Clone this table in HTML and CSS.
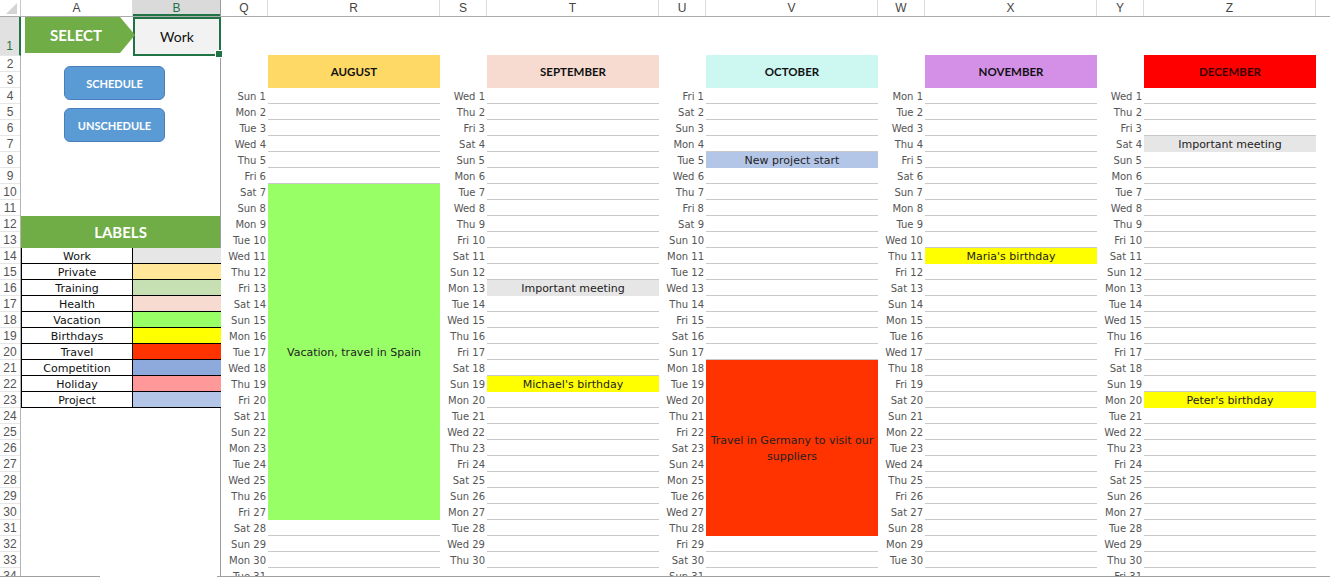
FILE: index.html
```html
<!DOCTYPE html>
<html>
<head>
<meta charset="utf-8">
<title>Calendar</title>
<link rel="stylesheet" href="styles.css">
</head>
<body>
<div class="sheet">
  <div class="colhead">
    <span class="corner"><svg width="20" height="16" viewBox="0 0 20 16"><polygon points="17,3 17,14 6,14" fill="#d4d4d4"/></svg></span>
    <span class="wa">A</span>
    <span class="wb sel">B</span>
    <span class="wq">Q</span><span class="wr">R</span>
    <span class="wq">S</span><span class="wr">T</span>
    <span class="wq">U</span><span class="wr">V</span>
    <span class="wq">W</span><span class="wr">X</span>
    <span class="wq">Y</span><span class="wr">Z</span>
    <span class="rest"></span>
  </div>
  <div class="body">
    <div class="rowhead">
      <span class="r1">1</span><span>2</span><span>3</span><span>4</span><span>5</span><span>6</span><span>7</span><span>8</span><span>9</span><span>10</span><span>11</span><span>12</span><span>13</span><span>14</span><span>15</span><span>16</span><span>17</span><span>18</span><span>19</span><span>20</span><span>21</span><span>22</span><span>23</span><span>24</span><span>25</span><span>26</span><span>27</span><span>28</span><span>29</span><span>30</span><span>31</span><span>32</span><span>33</span><span>34</span>
    </div>
    <div class="left">
      <div class="row1">
        <div class="acell"><div class="arrow">SELECT</div></div>
        <div class="work">Work</div>
      </div>
      <div class="buttons">
        <div class="btn">SCHEDULE</div>
        <div class="btn">UNSCHEDULE</div>
      </div>
      <div class="labels-head">LABELS</div>
      <div class="ltable">
        <span class="n">Work</span><span class="sw c-work"></span>
        <span class="n">Private</span><span class="sw c-private"></span>
        <span class="n">Training</span><span class="sw c-training"></span>
        <span class="n">Health</span><span class="sw c-health"></span>
        <span class="n">Vacation</span><span class="sw c-vacation"></span>
        <span class="n">Birthdays</span><span class="sw c-birthday"></span>
        <span class="n">Travel</span><span class="sw c-travel"></span>
        <span class="n">Competition</span><span class="sw c-competition"></span>
        <span class="n">Holiday</span><span class="sw c-holiday"></span>
        <span class="n">Project</span><span class="sw c-project"></span>
      </div>
    </div>
    <div class="months">
      <div class="month">
        <div class="mhead m-aug">AUGUST</div>
        <div class="days">
          <span class="d">Sun 1</span><span class="c"></span>
          <span class="d">Mon 2</span><span class="c"></span>
          <span class="d">Tue 3</span><span class="c"></span>
          <span class="d">Wed 4</span><span class="c"></span>
          <span class="d">Thu 5</span><span class="c"></span>
          <span class="d">Fri 6</span><span class="c"></span>
          <span class="d">Sat 7</span><span class="ev c-vacation s21">Vacation, travel in Spain</span>
          <span class="d">Sun 8</span>
          <span class="d">Mon 9</span>
          <span class="d">Tue 10</span>
          <span class="d">Wed 11</span>
          <span class="d">Thu 12</span>
          <span class="d">Fri 13</span>
          <span class="d">Sat 14</span>
          <span class="d">Sun 15</span>
          <span class="d">Mon 16</span>
          <span class="d">Tue 17</span>
          <span class="d">Wed 18</span>
          <span class="d">Thu 19</span>
          <span class="d">Fri 20</span>
          <span class="d">Sat 21</span>
          <span class="d">Sun 22</span>
          <span class="d">Mon 23</span>
          <span class="d">Tue 24</span>
          <span class="d">Wed 25</span>
          <span class="d">Thu 26</span>
          <span class="d">Fri 27</span>
          <span class="d">Sat 28</span><span class="c"></span>
          <span class="d">Sun 29</span><span class="c"></span>
          <span class="d">Mon 30</span><span class="c"></span>
          <span class="d">Tue 31</span><span class="c"></span>
        </div>
      </div>
      <div class="month">
        <div class="mhead m-sep">SEPTEMBER</div>
        <div class="days">
          <span class="d">Wed 1</span><span class="c"></span>
          <span class="d">Thu 2</span><span class="c"></span>
          <span class="d">Fri 3</span><span class="c"></span>
          <span class="d">Sat 4</span><span class="c"></span>
          <span class="d">Sun 5</span><span class="c"></span>
          <span class="d">Mon 6</span><span class="c"></span>
          <span class="d">Tue 7</span><span class="c"></span>
          <span class="d">Wed 8</span><span class="c"></span>
          <span class="d">Thu 9</span><span class="c"></span>
          <span class="d">Fri 10</span><span class="c"></span>
          <span class="d">Sat 11</span><span class="c"></span>
          <span class="d">Sun 12</span><span class="c"></span>
          <span class="d">Mon 13</span><span class="ev c-work">Important meeting</span>
          <span class="d">Tue 14</span><span class="c"></span>
          <span class="d">Wed 15</span><span class="c"></span>
          <span class="d">Thu 16</span><span class="c"></span>
          <span class="d">Fri 17</span><span class="c"></span>
          <span class="d">Sat 18</span><span class="c"></span>
          <span class="d">Sun 19</span><span class="ev c-birthday">Michael's birthday</span>
          <span class="d">Mon 20</span><span class="c"></span>
          <span class="d">Tue 21</span><span class="c"></span>
          <span class="d">Wed 22</span><span class="c"></span>
          <span class="d">Thu 23</span><span class="c"></span>
          <span class="d">Fri 24</span><span class="c"></span>
          <span class="d">Sat 25</span><span class="c"></span>
          <span class="d">Sun 26</span><span class="c"></span>
          <span class="d">Mon 27</span><span class="c"></span>
          <span class="d">Tue 28</span><span class="c"></span>
          <span class="d">Wed 29</span><span class="c"></span>
          <span class="d">Thu 30</span><span class="c"></span>
          <span class="d"></span><span class="e"></span>
        </div>
      </div>
      <div class="month">
        <div class="mhead m-oct">OCTOBER</div>
        <div class="days">
          <span class="d">Fri 1</span><span class="c"></span>
          <span class="d">Sat 2</span><span class="c"></span>
          <span class="d">Sun 3</span><span class="c"></span>
          <span class="d">Mon 4</span><span class="c"></span>
          <span class="d">Tue 5</span><span class="ev c-project">New project start</span>
          <span class="d">Wed 6</span><span class="c"></span>
          <span class="d">Thu 7</span><span class="c"></span>
          <span class="d">Fri 8</span><span class="c"></span>
          <span class="d">Sat 9</span><span class="c"></span>
          <span class="d">Sun 10</span><span class="c"></span>
          <span class="d">Mon 11</span><span class="c"></span>
          <span class="d">Tue 12</span><span class="c"></span>
          <span class="d">Wed 13</span><span class="c"></span>
          <span class="d">Thu 14</span><span class="c"></span>
          <span class="d">Fri 15</span><span class="c"></span>
          <span class="d">Sat 16</span><span class="c"></span>
          <span class="d">Sun 17</span><span class="c"></span>
          <span class="d">Mon 18</span><span class="ev c-travel s11">Travel in Germany to visit our suppliers</span>
          <span class="d">Tue 19</span>
          <span class="d">Wed 20</span>
          <span class="d">Thu 21</span>
          <span class="d">Fri 22</span>
          <span class="d">Sat 23</span>
          <span class="d">Sun 24</span>
          <span class="d">Mon 25</span>
          <span class="d">Tue 26</span>
          <span class="d">Wed 27</span>
          <span class="d">Thu 28</span>
          <span class="d">Fri 29</span><span class="c"></span>
          <span class="d">Sat 30</span><span class="c"></span>
          <span class="d">Sun 31</span><span class="c"></span>
        </div>
      </div>
      <div class="month">
        <div class="mhead m-nov">NOVEMBER</div>
        <div class="days">
          <span class="d">Mon 1</span><span class="c"></span>
          <span class="d">Tue 2</span><span class="c"></span>
          <span class="d">Wed 3</span><span class="c"></span>
          <span class="d">Thu 4</span><span class="c"></span>
          <span class="d">Fri 5</span><span class="c"></span>
          <span class="d">Sat 6</span><span class="c"></span>
          <span class="d">Sun 7</span><span class="c"></span>
          <span class="d">Mon 8</span><span class="c"></span>
          <span class="d">Tue 9</span><span class="c"></span>
          <span class="d">Wed 10</span><span class="c"></span>
          <span class="d">Thu 11</span><span class="ev c-birthday">Maria's birthday</span>
          <span class="d">Fri 12</span><span class="c"></span>
          <span class="d">Sat 13</span><span class="c"></span>
          <span class="d">Sun 14</span><span class="c"></span>
          <span class="d">Mon 15</span><span class="c"></span>
          <span class="d">Tue 16</span><span class="c"></span>
          <span class="d">Wed 17</span><span class="c"></span>
          <span class="d">Thu 18</span><span class="c"></span>
          <span class="d">Fri 19</span><span class="c"></span>
          <span class="d">Sat 20</span><span class="c"></span>
          <span class="d">Sun 21</span><span class="c"></span>
          <span class="d">Mon 22</span><span class="c"></span>
          <span class="d">Tue 23</span><span class="c"></span>
          <span class="d">Wed 24</span><span class="c"></span>
          <span class="d">Thu 25</span><span class="c"></span>
          <span class="d">Fri 26</span><span class="c"></span>
          <span class="d">Sat 27</span><span class="c"></span>
          <span class="d">Sun 28</span><span class="c"></span>
          <span class="d">Mon 29</span><span class="c"></span>
          <span class="d">Tue 30</span><span class="c"></span>
          <span class="d"></span><span class="e"></span>
        </div>
      </div>
      <div class="month">
        <div class="mhead m-dec">DECEMBER</div>
        <div class="days">
          <span class="d">Wed 1</span><span class="c"></span>
          <span class="d">Thu 2</span><span class="c"></span>
          <span class="d">Fri 3</span><span class="c"></span>
          <span class="d">Sat 4</span><span class="ev c-work">Important meeting</span>
          <span class="d">Sun 5</span><span class="c"></span>
          <span class="d">Mon 6</span><span class="c"></span>
          <span class="d">Tue 7</span><span class="c"></span>
          <span class="d">Wed 8</span><span class="c"></span>
          <span class="d">Thu 9</span><span class="c"></span>
          <span class="d">Fri 10</span><span class="c"></span>
          <span class="d">Sat 11</span><span class="c"></span>
          <span class="d">Sun 12</span><span class="c"></span>
          <span class="d">Mon 13</span><span class="c"></span>
          <span class="d">Tue 14</span><span class="c"></span>
          <span class="d">Wed 15</span><span class="c"></span>
          <span class="d">Thu 16</span><span class="c"></span>
          <span class="d">Fri 17</span><span class="c"></span>
          <span class="d">Sat 18</span><span class="c"></span>
          <span class="d">Sun 19</span><span class="c"></span>
          <span class="d">Mon 20</span><span class="ev c-birthday">Peter's birthday</span>
          <span class="d">Tue 21</span><span class="c"></span>
          <span class="d">Wed 22</span><span class="c"></span>
          <span class="d">Thu 23</span><span class="c"></span>
          <span class="d">Fri 24</span><span class="c"></span>
          <span class="d">Sat 25</span><span class="c"></span>
          <span class="d">Sun 26</span><span class="c"></span>
          <span class="d">Mon 27</span><span class="c"></span>
          <span class="d">Tue 28</span><span class="c"></span>
          <span class="d">Wed 29</span><span class="c"></span>
          <span class="d">Thu 30</span><span class="c"></span>
          <span class="d">Fri 31</span><span class="c"></span>
        </div>
      </div>
    </div>
  </div>
  <div class="foot"><i class="f1"></i><i class="gap"></i><i class="f2"></i></div>
</div>
</body>
</html>
```
FILE: styles.css
```css
* { box-sizing: border-box; margin: 0; padding: 0; }
html, body { width: 1330px; height: 578px; overflow: hidden; background: #fff; }
body { font-family: "DejaVu Sans", sans-serif; }

.sheet { width: 1330px; height: 578px; display: flex; flex-direction: column; }

/* column header */
.colhead {
  display: flex; height: 17px; flex-shrink: 0;
  border-bottom: 1px solid #ababab;
  font: 12px "Liberation Sans", Arial, sans-serif; color: #444;
}
.colhead span {
  display: flex; align-items: center; justify-content: center;
  height: 16px; border-right: 1px solid #dcdcdc; flex-shrink: 0;
}
.colhead .corner { width: 21px; border-right: 1px solid #c8c8c8; }
.colhead .wa { width: 112px; }
.colhead .wb { width: 88px; border-right-color: #9c9c9c; }
.colhead .wq { width: 47px; }
.colhead .wr { width: 172px; }
.colhead .rest { flex: 1; border-right: none; }
.colhead .sel { background: #dadada; color: #217346; box-shadow: inset 0 -2px 0 #217346; }

/* body */
.body { display: flex; height: 559px; overflow: hidden; flex-shrink: 0; }

.rowhead {
  width: 21px; flex-shrink: 0; border-right: 1px solid #b4b4b4;
  font: 12px "Liberation Sans", Arial, sans-serif; color: #555;
}
.rowhead span {
  display: flex; align-items: center; justify-content: center;
  height: 16px; border-bottom: 1px solid #e6e6e6;
}
.rowhead .r1 {
  height: 39px; align-items: flex-end; padding-bottom: 2px;
  background: #e1e1e1; color: #217346;
  border-right: 2px solid #217346; margin-right: -1px;
}

/* left panel: columns A and B */
.left { width: 200px; flex-shrink: 0; border-right: 1px solid #9c9c9c; }
.row1 { display: flex; height: 39px; }
.acell { width: 112px; flex-shrink: 0; position: relative; z-index: 1; }
.arrow {
  width: 110px; height: 36px; margin-left: 4px;
  background: #70ad47;
  clip-path: polygon(0 0, 95px 0, 110px 18px, 95px 36px, 0 36px);
  display: flex; align-items: center; justify-content: center; padding-right: 8px;
  color: #fff; font: bold 15px Lato, sans-serif;
}
.work {
  width: 88px; height: 39px; flex-shrink: 0; position: relative;
  border: 2px solid #217346; background: #f2f2f2;
  display: flex; align-items: center; justify-content: center;
  font: 14px Lato, sans-serif; color: #111;
}
.work::after {
  content: ""; position: absolute; right: -4px; bottom: -4px;
  width: 6px; height: 6px; background: #217346; border: 1px solid #fff;
}

.buttons { display: flex; flex-direction: column; gap: 8px; padding: 10px 0 0 43px; }
.btn {
  width: 101px; height: 34px; border-radius: 6px;
  background: #5b9bd5; border: 1px solid #4a7ebb;
  display: flex; align-items: center; justify-content: center;
  color: #fff; font: bold 11px Lato, sans-serif;
}

.labels-head {
  margin-top: 74px; height: 32px; background: #70ad47;
  display: flex; align-items: center; justify-content: center;
  color: #fff; font: bold 15px Lato, sans-serif;
}
.ltable { display: grid; grid-template-columns: 112px 88px; }
.ltable span { height: 16px; border-bottom: 1px solid #000; }
.ltable .n {
  border-left: 1px solid #000; border-right: 1px solid #000;
  text-align: center; font-size: 11px; line-height: 15px; padding-top: 1px; color: #111;
}

/* colours */
.c-work { background: #e7e6e6; }
.c-private { background: #ffe699; }
.c-training { background: #c6e0b4; }
.c-health { background: #f8dbd0; }
.c-vacation { background: #99ff66; }
.c-birthday { background: #ffff00; }
.c-travel { background: #ff3300; }
.c-competition { background: #8ea9db; }
.c-holiday { background: #ff9999; }
.c-project { background: #b4c6e7; }

/* months */
.months { display: flex; }
.month { width: 219px; flex-shrink: 0; }
.mhead {
  margin: 38px 0 0 47px; width: 172px; height: 33px;
  display: flex; align-items: center; justify-content: center;
  font: bold 11.5px Lato, sans-serif; color: #111;
}
.m-aug { background: #ffd966; }
.m-sep { background: #f8dbd0; }
.m-oct { background: #cdf7f1; }
.m-nov { background: #d490e7; }
.m-dec { background: #ff0000; color: #3a0000; }

.days { display: grid; grid-template-columns: 47px 172px; grid-auto-rows: 16px; }
.d {
  font-size: 10px; line-height: 16px; padding-top: 1px; color: #555;
  text-align: right; padding-right: 2px; white-space: nowrap;
}
.c { border-bottom: 1px solid #c9c9c9; }
.ev {
  display: flex; align-items: center; justify-content: center; text-align: center;
  font-size: 11px; line-height: 16px; color: #222; padding: 1px 2px 0;
}
.s21 { grid-row: span 21; }
.s11 { grid-row: span 11; }

/* bottom strip */
.foot { display: flex; height: 2px; flex-shrink: 0; }
.foot i { border-top: 1px solid #a0a0a0; }
.foot .f1 { width: 100px; }
.foot .gap { width: 117px; border-top: none; }
.foot .f2 { flex: 1; }
```
